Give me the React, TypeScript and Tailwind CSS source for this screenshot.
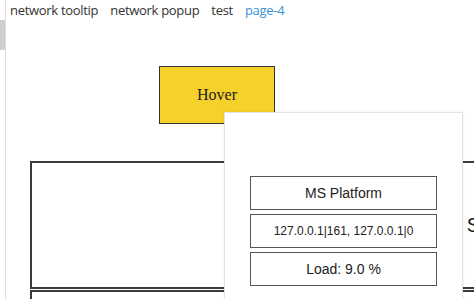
export default function App() {
  const navLinks = [
    { label: "network tooltip", active: false },
    { label: "network popup", active: false },
    { label: "test", active: false },
    { label: "page-4", active: true },
  ];

  return (
    <div className="relative h-[299px] w-[474px] overflow-hidden bg-white">
      {/* left rail */}
      <div className="absolute left-0 top-0 h-full w-[6px] border-r border-[#dcdcdc]">
        <div className="mt-[20px] h-[30px] w-[5px] bg-[#cfcfcf]" />
      </div>

      <div className="pl-[10px]">
        <nav className="flex h-[20px] items-center gap-[12px] font-['Open_Sans',sans-serif] text-[13px] leading-none tracking-[-0.3px]">
          {navLinks.map((l) => (
            <span key={l.label} className={l.active ? "text-[#3b8fd4]" : "text-[#333]"}>
              {l.label}
            </span>
          ))}
        </nav>

        <div className="ml-[149px] mt-[46px] flex h-[58px] w-[116px] items-center justify-center border border-[#333] bg-[#f6d12c] font-['Liberation_Serif',serif] text-[16px] text-[#222]">
          Hover
        </div>

        <div className="ml-[20px] mt-[37px] flex h-[128px] w-[470px] items-center justify-end border-2 border-[#3a3a3a] pr-[18px] font-['Liberation_Sans',sans-serif] text-[20px] text-[#222]">
          S
        </div>
        <div className="ml-[20px] mt-[1px] h-[40px] w-[470px] border-2 border-[#3a3a3a]" />
      </div>

      {/* popup */}
      <div className="absolute left-[224px] top-[112px] h-[220px] w-[239px] border border-[#e2e2e2] bg-white shadow-[0_0_2px_rgba(0,0,0,0.08)]">
        <div className="mt-[63px] flex flex-col gap-[4px] px-[25px] font-['Liberation_Sans',sans-serif] text-[#222]">
          <div className="flex h-[34px] items-center justify-center border border-[#555] text-[14px]">MS Platform</div>
          <div className="flex h-[34px] items-center justify-center border border-[#555] text-[12px]">127.0.0.1|161, 127.0.0.1|0</div>
          <div className="flex h-[34px] items-center justify-center border border-[#555] text-[14px]">Load: 9.0 %</div>
        </div>
      </div>
    </div>
  );
}
